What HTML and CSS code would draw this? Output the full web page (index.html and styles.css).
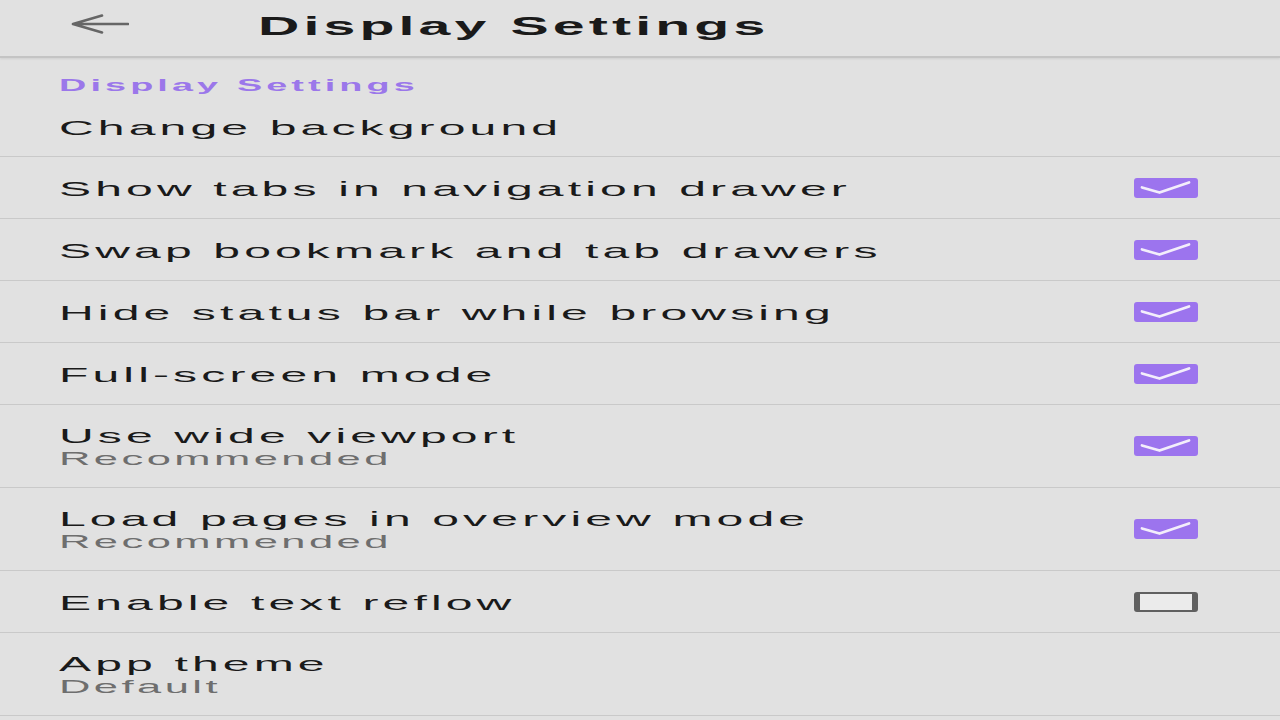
FILE: index.html
```html
<!DOCTYPE html>
<html lang="en">
<head>
    <meta charset="UTF-8">
    <meta name="viewport" content="width=device-width, initial-scale=1.0">
    <title>Display Settings</title>
    <link rel="stylesheet" href="styles.css">
</head>
<body>

    <!-- Toolbar -->
    <header class="toolbar">
        <span class="back">
            <svg width="58" height="20" viewBox="0 0 58 20">
                <path d="M2 10 H57 M2 10 L31 1.5 M2 10 L31 18.5" stroke="#666" stroke-width="2.6" fill="none" stroke-linecap="round"/>
            </svg>
        </span>
        <h1><span class="wide">Display Settings</span></h1>
    </header>

    <!-- Preference list -->
    <section class="prefs">
        <div class="category"><span class="wide">Display Settings</span></div>

        <div class="row first">
            <div class="label"><span class="wide">Change background</span></div>
        </div>

        <div class="row">
            <div class="label"><span class="wide">Show tabs in navigation drawer</span></div>
            <span class="check on"><svg viewBox="0 0 64 20"><path d="M8 9.5 L25.5 14.5 L55 4.5" /></svg></span>
        </div>

        <div class="row">
            <div class="label"><span class="wide">Swap bookmark and tab drawers</span></div>
            <span class="check on"><svg viewBox="0 0 64 20"><path d="M8 9.5 L25.5 14.5 L55 4.5" /></svg></span>
        </div>

        <div class="row">
            <div class="label"><span class="wide">Hide status bar while browsing</span></div>
            <span class="check on"><svg viewBox="0 0 64 20"><path d="M8 9.5 L25.5 14.5 L55 4.5" /></svg></span>
        </div>

        <div class="row">
            <div class="label"><span class="wide">Full-screen mode</span></div>
            <span class="check on"><svg viewBox="0 0 64 20"><path d="M8 9.5 L25.5 14.5 L55 4.5" /></svg></span>
        </div>

        <div class="row tall">
            <div class="label">
                <span class="wide">Use wide viewport</span>
                <span class="wide sub">Recommended</span>
            </div>
            <span class="check on"><svg viewBox="0 0 64 20"><path d="M8 9.5 L25.5 14.5 L55 4.5" /></svg></span>
        </div>

        <div class="row tall">
            <div class="label">
                <span class="wide">Load pages in overview mode</span>
                <span class="wide sub">Recommended</span>
            </div>
            <span class="check on"><svg viewBox="0 0 64 20"><path d="M8 9.5 L25.5 14.5 L55 4.5" /></svg></span>
        </div>

        <div class="row">
            <div class="label"><span class="wide">Enable text reflow</span></div>
            <span class="check off"></span>
        </div>

        <div class="row tall">
            <div class="label">
                <span class="wide">App theme</span>
                <span class="wide sub">Default</span>
            </div>
        </div>
    </section>

</body>
</html>
```

FILE: styles.css
```css
body {
    margin: 0;
    padding: 0;
    background: #e1e1e1;
    font-family: "Liberation Sans", Arial, sans-serif;
    color: #1a1a1a;
    overflow: hidden;
}

/* stretched text, like the screenshot */
.wide {
    display: inline-block;
    transform: scaleX(2.29);
    transform-origin: left center;
    white-space: nowrap;
}

/* Toolbar */
.toolbar {
    height: 56px;
    display: flex;
    align-items: center;
    border-bottom: 2px solid #c4c4c4;
    box-shadow: 0 1px 2px rgba(0, 0, 0, 0.08);
}

.back {
    width: 187px;
    padding-left: 71px;
    display: flex;
    align-items: center;
    margin-top: -8px;
}

.toolbar h1 {
    margin: 0;
    margin-top: -4px;
    font-size: 25px;
    font-weight: bold;
    letter-spacing: 1.8px;
    line-height: 28px;
}

/* Preferences */
.category {
    padding: 15px 0 0 59px;
    height: 24px;
    line-height: 24px;
    font-size: 16.5px;
    font-weight: bold;
    letter-spacing: 1.8px;
    color: #9b77ea;
}

.row {
    height: 61px;
    display: flex;
    align-items: center;
    justify-content: space-between;
    padding: 0 82px 0 59px;
    border-bottom: 1px solid #c9c9c9;
}

.row.first {
    height: 59px;
}

.row.tall {
    height: 82px;
}

.label {
    display: flex;
    flex-direction: column;
    font-size: 21px;
    line-height: 24px;
    letter-spacing: 1.8px;
    padding-top: 2px;
}

.label .sub {
    font-size: 19px;
    line-height: 22px;
    letter-spacing: 1.5px;
    color: #6e6e6e;
}

/* Checkboxes */
.check {
    width: 64px;
    height: 20px;
    box-sizing: border-box;
    border-radius: 3px;
}

.check.on {
    background: #9c74ee;
}

.check svg {
    display: block;
    width: 64px;
    height: 20px;
}

.check svg path {
    fill: none;
    stroke: #f3eefb;
    stroke-width: 2.8;
    stroke-linecap: round;
    stroke-linejoin: round;
}

.check.off {
    border: 2px solid #606060;
    border-left-width: 6px;
    border-right-width: 6px;
    background: #ebebeb;
}
```
